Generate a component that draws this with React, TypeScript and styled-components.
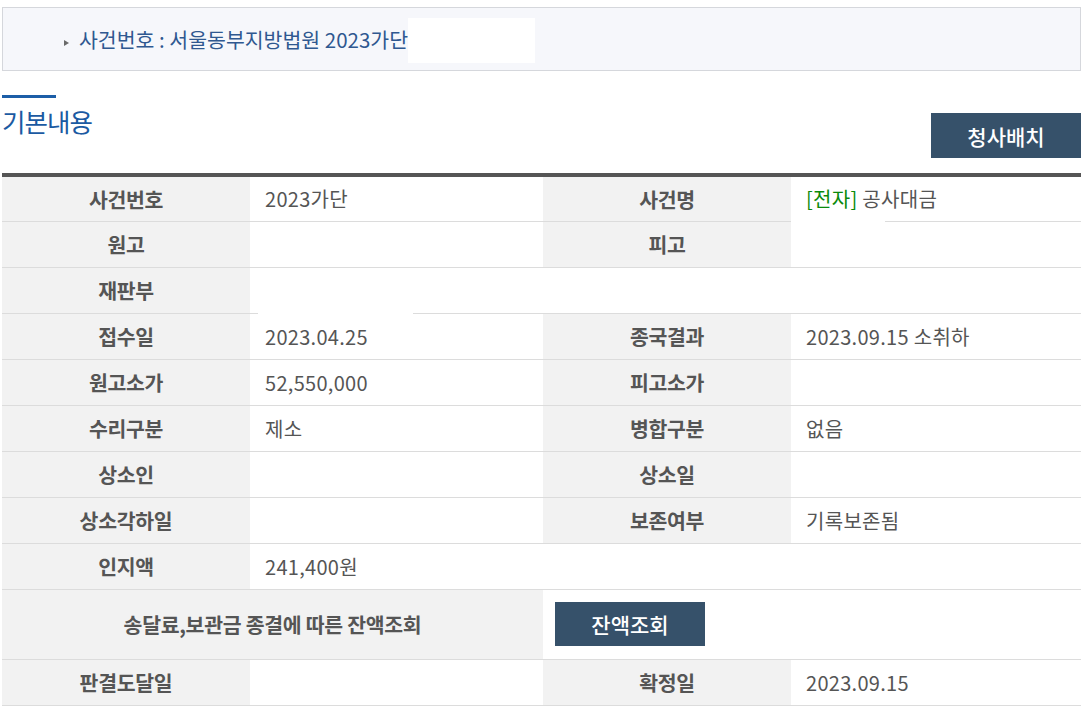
import React from "react";
import styled, { createGlobalStyle } from "styled-components";

const Global = createGlobalStyle`
  html, body { margin: 0; padding: 0; background: #fff; }
  body { font-family: "Noto Sans CJK KR", "Noto Sans", sans-serif; }
  * { box-sizing: border-box; }
`;

const Page = styled.div`
  width: 1081px;
  padding: 7px 0 0 2px;
`;

const CaseBar = styled.div`
  height: 64px;
  background: #f6f7fb;
  border: 1px solid #d5d7dc;
  display: flex;
  align-items: center;
  padding-left: 61px;
`;

const Bullet = styled.span`
  width: 0;
  height: 0;
  border-top: 3.5px solid transparent;
  border-bottom: 3.5px solid transparent;
  border-left: 5px solid #6a6a6a;
  margin: 8px 10px 0 0;
`;

const CaseText = styled.span`
  font-size: 20.5px;
  color: #2f5890;
  letter-spacing: 0;
`;

const Redact = styled.span`
  display: inline-block;
  width: 127px;
  height: 45px;
  background: #fff;
  margin-top: 2px;
`;

const TitleRow = styled.div`
  margin-top: 24px;
  height: 78px;
  display: flex;
  justify-content: space-between;
  align-items: flex-end;
  padding-bottom: 15px;
`;

const TitleBlock = styled.div`
  align-self: flex-start;
`;

const TitleLine = styled.div`
  width: 54px;
  height: 3px;
  background: #1c5ea7;
`;

const Heading = styled.h2`
  margin: 7px 0 0 0;
  font-size: 25.5px;
  font-weight: 400;
  color: #1b5aa2;
  letter-spacing: -1px;
  line-height: 32px;
`;

const DarkButton = styled.button<{ $w: number; $h: number }>`
  width: ${(p) => p.$w}px;
  height: ${(p) => p.$h}px;
  background: #36516a;
  color: #fff;
  border: 0;
  font-family: "Noto Sans CJK KR", sans-serif;
  font-size: 21px;
  font-weight: 500;
  letter-spacing: 0;
  padding: 0;
  display: block;
`;

const Table = styled.table`
  width: 1079px;
  border-collapse: collapse;
  table-layout: fixed;
  border-top: 4px solid #555;
`;

const Th = styled.th`
  background: #f2f2f2;
  height: 46px;
  border-bottom: 1px solid #dcdcdc;
  font-size: 20.5px;
  font-weight: 700;
  color: #555;
  text-align: center;
  letter-spacing: -0.3px;
  padding: 0;
`;

const Td = styled.td<{ $tall?: boolean }>`
  position: relative;
  height: ${(p) => (p.$tall ? 70 : 46)}px;
  border-bottom: 1px solid #dcdcdc;
  font-size: 20px;
  color: #555;
  padding: ${(p) => (p.$tall ? "0 0 0 12px" : "0 0 0 15px")};
  letter-spacing: 0.3px;
`;

const Green = styled.span`
  color: #0a8a0a;
`;

const LineMask = styled.span<{ $left: number; $width: number }>`
  position: absolute;
  bottom: -1px;
  left: ${(p) => p.$left}px;
  width: ${(p) => p.$width}px;
  height: 2px;
  background: #fff;
`;

type Row = [string, React.ReactNode, string?, React.ReactNode?];

const rows: Row[] = [
  ["사건번호", "2023가단", "사건명", <><Green>[전자]</Green> 공사대금<LineMask $left={0} $width={94} /></>],
  ["원고", "", "피고", ""],
];

const rowsB: Row[] = [
  ["접수일", "2023.04.25", "종국결과", "2023.09.15 소취하"],
  ["원고소가", "52,550,000", "피고소가", ""],
  ["수리구분", "제소", "병합구분", "없음"],
  ["상소인", "", "상소일", ""],
  ["상소각하일", "", "보존여부", "기록보존됨"],
];

const FourCol = ({ r }: { r: Row }) => (
  <tr>
    <Th>{r[0]}</Th>
    <Td>{r[1]}</Td>
    <Th>{r[2]}</Th>
    <Td>{r[3]}</Td>
  </tr>
);

export default function App() {
  return (
    <Page>
      <Global />
      <CaseBar>
        <Bullet />
        <CaseText>사건번호 : 서울동부지방법원 2023가단</CaseText>
        <Redact />
      </CaseBar>
      <TitleRow>
        <TitleBlock>
          <TitleLine />
          <Heading>기본내용</Heading>
        </TitleBlock>
        <DarkButton $w={150} $h={45}>청사배치</DarkButton>
      </TitleRow>
      <Table>
        <colgroup>
          <col style={{ width: 248 }} />
          <col style={{ width: 293 }} />
          <col style={{ width: 248 }} />
          <col style={{ width: 290 }} />
        </colgroup>
        <tbody>
          {rows.map((r) => (
            <FourCol key={r[0]} r={r} />
          ))}
          <tr>
            <Th>재판부</Th>
            <Td colSpan={3}>
              <LineMask $left={8} $width={155} />
            </Td>
          </tr>
          {rowsB.map((r) => (
            <FourCol key={r[0]} r={r} />
          ))}
          <tr>
            <Th>인지액</Th>
            <Td colSpan={3}>241,400원</Td>
          </tr>
          <tr>
            <Th colSpan={2}>송달료,보관금 종결에 따른 잔액조회</Th>
            <Td colSpan={2} $tall>
              <DarkButton $w={150} $h={44}>잔액조회</DarkButton>
            </Td>
          </tr>
          <FourCol r={["판결도달일", "", "확정일", "2023.09.15"]} />
        </tbody>
      </Table>
    </Page>
  );
}
